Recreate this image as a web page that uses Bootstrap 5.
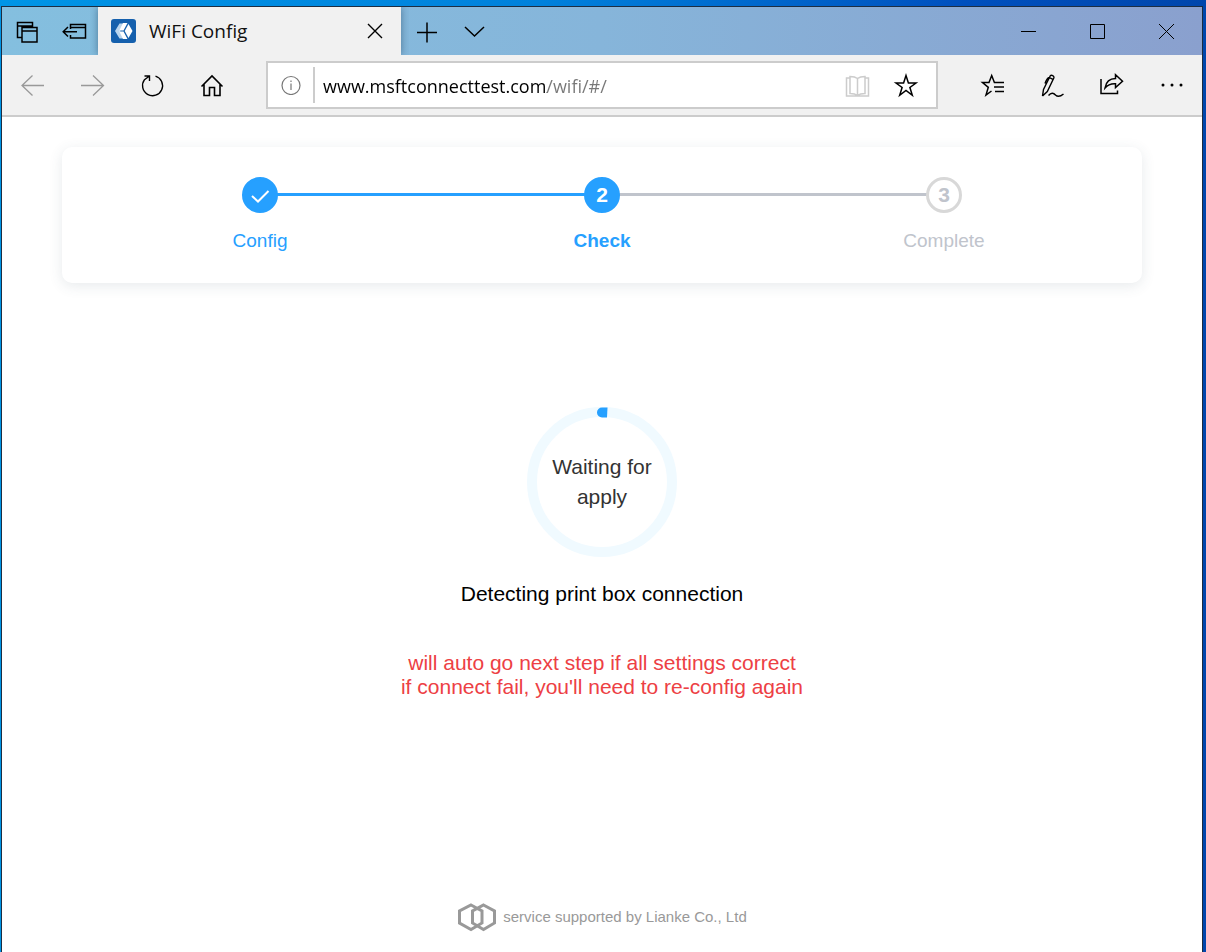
<!DOCTYPE html>
<html lang="en">
<head>
<meta charset="utf-8">
<meta name="viewport" content="width=device-width, initial-scale=1">
<title>WiFi Config</title>
<link href="https://cdn.jsdelivr.net/npm/bootstrap@5.3.0/dist/css/bootstrap.min.css" rel="stylesheet">
<style>
  body {
    font-family: "Liberation Sans", Arial, sans-serif;
    background: linear-gradient(90deg, #0095e6, #0081dc 45%, #0050be 80%, #0046ac);
    padding: 6px 3px 0 1px;
  }
  svg { display: block; fill: none; stroke: currentColor; }
  svg.solid { fill: currentColor; stroke: none; }
  button { color: #000; background: none; border: 0; padding: 0; }
  .browser { border: 1px solid #1c2d42; border-bottom: 0; min-height: calc(100vh - 6px); background: #fff; }
  .chrome-ui { font-family: "Open Sans", "Noto Sans", sans-serif; }

  .title-bar { height: 48px; background: linear-gradient(90deg, #84bfdf, #86b5da 50%, #8aa0ce); }
  .title-btn { width: 48px; height: 48px; }
  .win-btn { width: 69px; height: 48px; }
  .page-tab { width: 303px; background: #f1f1f1; padding: 0 18px 0 13px; font-size: 19px; box-shadow: 0 0 8px rgba(20, 50, 80, .5); clip-path: inset(0 -8px); }
  .tab-name { margin-left: 13px; color: #111; line-height: 24px; }

  .tool-bar { height: 62px; background: #f1f1f1; border-bottom: 2px solid #ccc; }
  .tool-btn { width: 60px; height: 60px; }
  .address { height: 48px; margin: 0 24px; border: 2px solid #ccc; background: #fff; padding-right: 6px; }
  .info-btn { width: 47px; height: 36px; border-right: 2px solid #ccc; color: #777; }
  .url {
    min-width: 0; height: 36px; border: 0; outline: 0; padding: 2px 0 0; margin-left: 8px; font-size: 18px;
    color: #000; -webkit-text-fill-color: transparent;
    background: linear-gradient(90deg, #000 224px, #777 224px); -webkit-background-clip: text; background-clip: text;
  }
  .muted-icon { color: #999; }
  .pale-icon { color: #ccc; }

  .steps-card { width: 90%; margin: 30px auto 0; padding: 30px 0; border-radius: 10px; background: #fff; box-shadow: 0 3px 14px rgba(60, 80, 100, .12); }
  .steps { width: 95%; }
  .step { position: relative; font-size: 19px; line-height: 24px; color: #c0c4cc; }
  .step + .step::before { content: ""; position: absolute; top: 16px; left: -50%; width: 100%; height: 3px; background: #c0c4cc; }
  .step.reached::before { background: #26a0ff; }
  .step.reached { color: #26a0ff; }
  .dot { position: relative; z-index: 1; width: 36px; height: 36px; border: 3px solid #d8d8d8; background: #fff; font-size: 21px; font-weight: 700; margin-bottom: 16px; }
  .reached .dot { border-color: #26a0ff; background: #26a0ff; color: #fff; }

  .ring { display: grid; width: 150px; height: 150px; margin-top: 124px; }
  .ring > * { grid-area: 1 / 1; }
  .ring-text { width: 110px; font-size: 21px; line-height: 30px; color: #333; place-self: center; }
  .status { font-size: 21px; line-height: 24px; color: #000; margin: 25px 0 45px; }
  .warn { font-size: 21px; line-height: 24px; color: #ed4044; }
  .credit { font-size: 15px; line-height: 30px; color: #999; padding-bottom: 20px; gap: 6px; }
</style>
</head>
<body>
<div class="browser d-flex flex-column">
  <header class="chrome-ui">
    <div class="title-bar d-flex">
      <button class="title-btn d-flex align-items-center justify-content-center" aria-label="Tabs you've set aside">
        <svg width="28" height="28" stroke-width="1.5"><path d="M9.5 20.5H5.5V5.5H20.5V10M5.5 9H20.5M10 10.5H25V25H10ZM10 14H25"/></svg>
      </button>
      <button class="title-btn d-flex align-items-center justify-content-center" aria-label="Set these tabs aside">
        <svg width="28" height="28" stroke-width="1.5"><path d="M10.5 12V7.5H25.5V21H10.5V18M10.5 10.5H25.5M3 14.7H17M8 10L3.2 14.7L8 19.5"/></svg>
      </button>
      <div class="page-tab d-flex align-items-center">
        <svg class="solid" width="25" height="24"><rect width="25" height="24" rx="3" fill="#1560ad"/><path d="M8.500 4.500L13 4.500L9 12L13 19.500L8.500 19.500L4 12Z" fill="#b9d5ee"/><path d="M12 4H16.500L12.500 11.500H8.300ZM8.300 12.500H12.500L16.500 20H12Z" fill="#fff"/><path d="M17.500 5L21.500 12L17.500 19L13.700 12Z" fill="#fff"/></svg>
        <span class="tab-name flex-grow-1">WiFi Config</span>
        <button aria-label="Close tab"><svg width="16" height="16" stroke-width="1.4"><path d="M1 1L15 15M15 1L1 15"/></svg></button>
      </div>
      <button class="title-btn d-flex align-items-center justify-content-center" aria-label="New tab">
        <svg width="28" height="24" stroke-width="1.500"><path d="M6 13.500H26M16 3.500V23.500"/></svg>
      </button>
      <button class="title-btn d-flex align-items-center justify-content-center" aria-label="Show tab previews">
        <svg width="28" height="24" stroke-width="1.500"><path d="M6 8L15.500 17L25 8"/></svg>
      </button>
      <div class="d-flex ms-auto">
        <button class="win-btn d-flex align-items-center justify-content-center" aria-label="Minimize"><svg width="20" height="16"><path d="M1 8.500H16"/></svg></button>
        <button class="win-btn d-flex align-items-center justify-content-center" aria-label="Maximize"><svg width="20" height="16"><path d="M1.500 1.500H15.500V15.500H1.500Z"/></svg></button>
        <button class="win-btn d-flex align-items-center justify-content-center" aria-label="Close"><svg width="20" height="16"><path d="M1 1L16 16M16 1L1 16"/></svg></button>
      </div>
    </div>

    <div class="tool-bar d-flex align-items-center">
      <button class="tool-btn muted-icon d-flex align-items-center justify-content-center" aria-label="Back"><svg width="28" height="28" stroke-width="1.300"><path d="M26 14.500H4M14.500 4.500L4 14.500L14.500 24.500"/></svg></button>
      <button class="tool-btn muted-icon d-flex align-items-center justify-content-center" aria-label="Forward"><svg width="28" height="28" stroke-width="1.300"><path d="M3 14.500H25.500M15 4.500L25.500 14.500L15 24.500"/></svg></button>
      <button class="tool-btn d-flex align-items-center justify-content-center" aria-label="Refresh"><svg width="28" height="28" stroke-width="1.400"><path d="M17.500 5.100A10 10 0 1 1 6.500 8.700L11.500 5M6.500 5H11.500V10"/></svg></button>
      <button class="tool-btn d-flex align-items-center justify-content-center" aria-label="Home"><svg width="28" height="28" stroke-width="1.600"><path d="M3.500 15.500L14 5L24.500 15.500M6 13.500V24.500H11.500V16.500H16.500V24.500H22V13.500"/></svg></button>
      <div class="address d-flex align-items-center flex-grow-1">
        <button class="info-btn flex-shrink-0 d-flex align-items-center justify-content-center" aria-label="Site information"><svg width="20" height="20" stroke-width="1.200"><circle cx="10" cy="10.500" r="9"/><path d="M10 8.500V15M10 5.500V7"/></svg></button>
        <input class="url flex-grow-1" type="text" aria-label="Address" value="www.msftconnecttest.com/wifi/#/">
        <button class="title-btn pale-icon flex-shrink-0 d-flex align-items-center justify-content-center" aria-label="Reading view"><svg width="30" height="28" stroke-width="1.500"><path d="M6.500 7H3.500V25H25.500V7H22.500M14.500 7.500C12 5.500 9 5.500 7 5.500V22.500C9 22.500 12 22.500 14.500 24.500C17 22.500 20 22.500 22 22.500V5.500C20 5.500 17 5.500 14.500 7.500V24.500"/></svg></button>
        <button class="title-btn flex-shrink-0 d-flex align-items-center justify-content-center" aria-label="Add to favorites"><svg width="28" height="28" stroke-width="1.500"><path d="M14 4.500L16.400 12H24L17.900 16.500L20.300 24.300L14 19.500L7.700 24.300L10.100 16.500L4 12H11.600Z"/></svg></button>
      </div>
      <button class="tool-btn d-flex align-items-center justify-content-center" aria-label="Favorites"><svg width="28" height="28" stroke-width="1.500"><path d="M26 11.500H16.400L13.700 4.500L11 11.500H4.500L10.300 16.300L8 24L13.500 20M16 16H26M17 20.500H26"/></svg></button>
      <button class="tool-btn d-flex align-items-center justify-content-center" aria-label="Add notes"><svg width="28" height="28" stroke-width="1.400"><path d="M4.500 25L5.500 18.500L12.300 4.800C13.300 3.500 16.500 4.800 15.800 7L9.300 20.500L4.500 25M11.500 6.500L14.800 8.300M11.500 6.500C10 5.800 8 9.500 7 12.500M10.500 24.500C13 21.500 15.500 21.500 17.500 24C19.500 26 22.500 25.500 25.500 23"/></svg></button>
      <button class="tool-btn d-flex align-items-center justify-content-center" aria-label="Share"><svg width="28" height="28" stroke-width="1.500"><path d="M3 8V22.500H19.500V19.500M7 17C8 11 12 7.500 17.500 7.500V3.800L24.500 10.200L17.500 16.500V12.800C13 12.500 10 13.500 7 17Z"/></svg></button>
      <button class="tool-btn d-flex align-items-center justify-content-center" aria-label="Settings and more"><svg class="solid" width="28" height="28"><circle cx="5" cy="14" r="1.500"/><circle cx="14" cy="14" r="1.500"/><circle cx="23" cy="14" r="1.500"/></svg></button>
    </div>
  </header>

  <main class="flex-grow-1 d-flex flex-column align-items-center text-center">
    <section class="steps-card">
      <ol class="steps row g-0 list-unstyled mx-auto mb-0">
        <li class="step reached col-4 d-flex flex-column align-items-center">
          <span class="dot rounded-circle d-flex align-items-center justify-content-center"><svg width="20" height="20" stroke-width="2"><path d="M2 11L8 16.500L18.500 6"/></svg></span>
          <span>Config</span>
        </li>
        <li class="step reached col-4 d-flex flex-column align-items-center" aria-current="step">
          <span class="dot rounded-circle d-flex align-items-center justify-content-center">2</span>
          <span class="fw-bold">Check</span>
        </li>
        <li class="step col-4 d-flex flex-column align-items-center">
          <span class="dot rounded-circle d-flex align-items-center justify-content-center">3</span>
          <span>Complete</span>
        </li>
      </ol>
    </section>

    <div class="ring">
      <svg width="150" height="150"><circle cx="75" cy="75" r="70" stroke="#f0faff" stroke-width="10"/><path d="M75 0.500H80.500L80 10.500H75A5 5 0 0 1 75 0.500Z" fill="#26a0ff" stroke="none"/></svg>
      <div class="ring-text">Waiting for apply</div>
    </div>
    <p class="status">Detecting print box connection</p>
    <p class="warn mb-0">will auto go next step if all settings correct<br>if connect fail, you'll need to re-config again</p>
  </main>

  <footer class="credit d-flex justify-content-center align-items-center">
    <svg width="40" height="30" stroke-width="3"><path d="M14 3L25 9V21L14 27.500L2.500 21V9ZM26.500 3L37.500 9V21L26.500 27.500L15.500 21V9Z"/></svg>
    <span>service supported by Lianke Co., Ltd</span>
  </footer>
</div>
<script src="https://cdn.jsdelivr.net/npm/bootstrap@5.3.0/dist/js/bootstrap.bundle.min.js"></script>
</body>
</html>
